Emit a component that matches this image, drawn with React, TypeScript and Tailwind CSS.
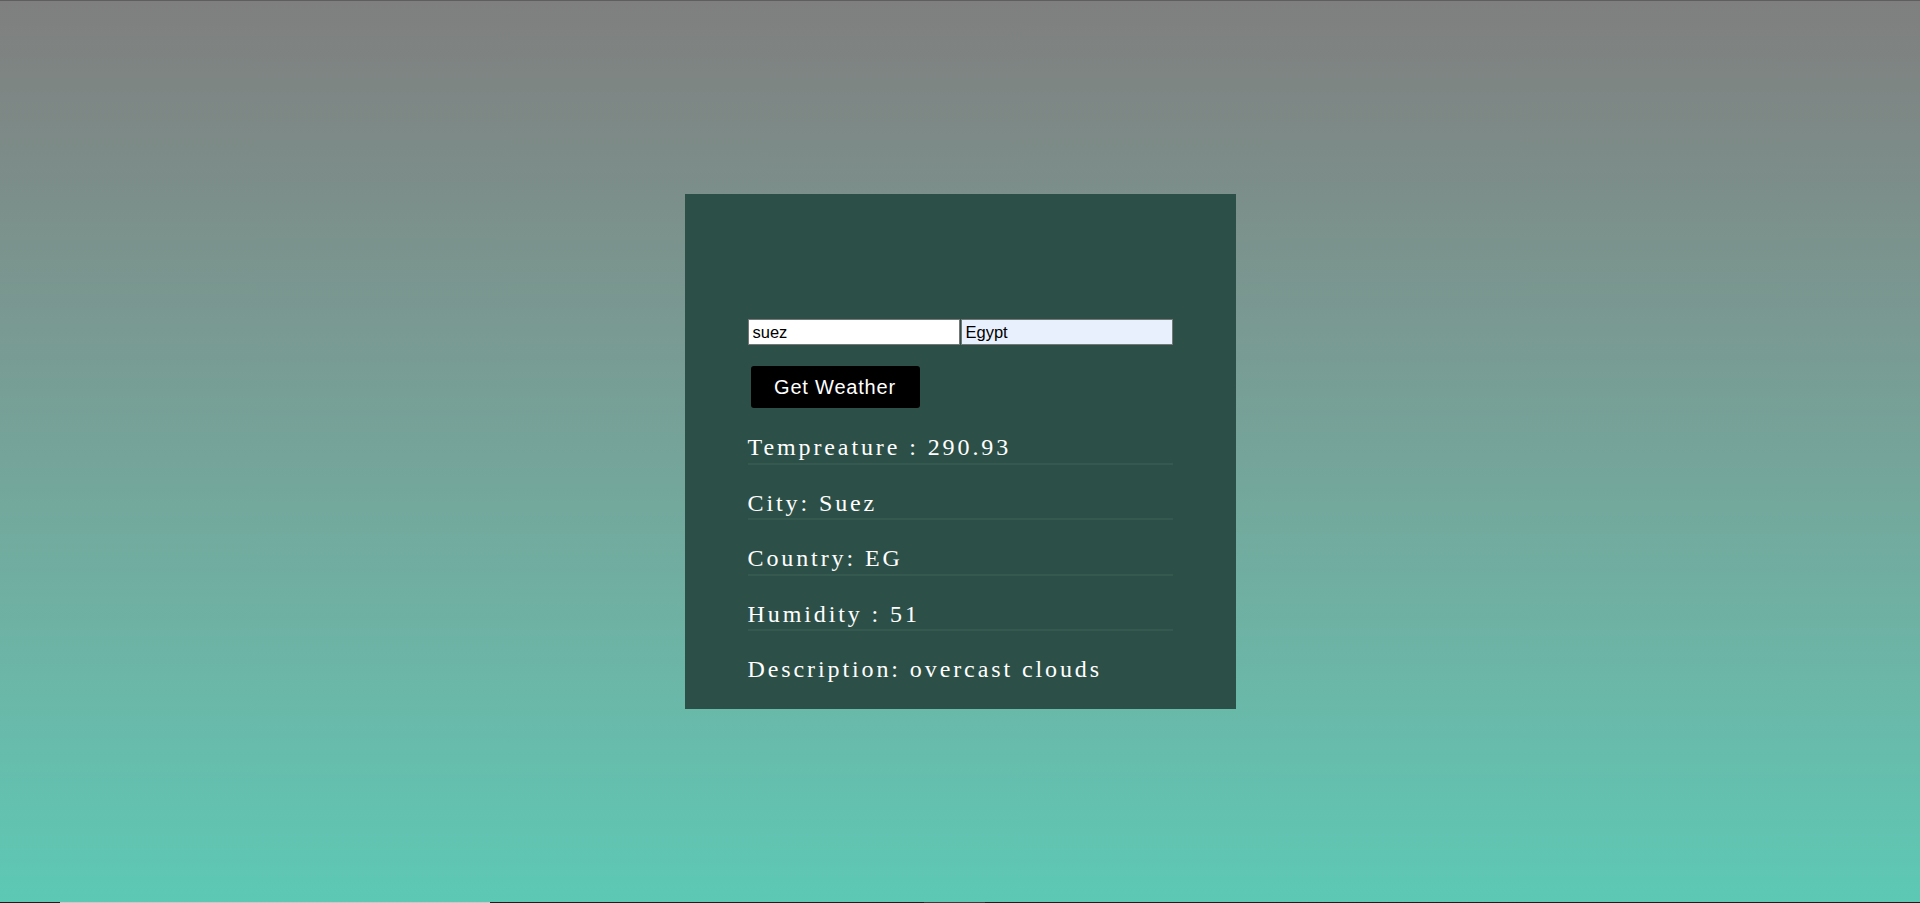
import React from "react";

const rows = [
  "Tempreature : 290.93",
  "City: Suez",
  "Country: EG",
  "Humidity : 51",
];

export default function App() {
  return (
    <div className="relative flex h-[903px] w-full flex-col overflow-hidden bg-gradient-to-b from-[#7f7f7f] to-[#5cc9b5]">
      <div className="h-px w-full bg-[#5e5e5e]" />
      <div className="flex flex-1 items-center justify-center">
        <div className="flex w-[551px] flex-col bg-[#2c5048] px-[63px] pt-[125px] pb-[25px]">
          <div className="flex gap-[1px]">
            <input
              defaultValue="suez"
              className="box-border h-[26px] w-[212px] border border-[#767676] bg-white pl-[4px] text-[16.5px] text-black outline-none"
              style={{ fontFamily: "Arial, 'Liberation Sans', sans-serif" }}
            />
            <input
              defaultValue="Egypt"
              className="box-border h-[26px] w-[212px] border border-[#767676] bg-[#e8f0fe] pl-[4px] text-[16.5px] text-black outline-none"
              style={{ fontFamily: "Arial, 'Liberation Sans', sans-serif" }}
            />
          </div>
          <button
            className="mt-[21px] ml-[3px] h-[42px] w-[169px] rounded-[3px] bg-black text-[20px] tracking-[0.8px] text-white"
            style={{ fontFamily: "Arial, 'Liberation Sans', sans-serif" }}
          >
            Get Weather
          </button>
          {rows.map((r, i) => (
            <p
              key={r}
              className={`${i === 0 ? "mt-[26px]" : "mt-[25px]"} border-b-2 border-[#35594f] pb-[1px] text-[24px] leading-[27.6px] tracking-[2.9px] text-white`}
              style={{ fontFamily: "'Times New Roman', 'Liberation Serif', serif" }}
            >
              {r}
            </p>
          ))}
          <p
            className="mt-[25px] text-[24px] leading-[27.6px] tracking-[2.9px] text-white"
            style={{ fontFamily: "'Times New Roman', 'Liberation Serif', serif" }}
          >
            Description: overcast clouds
          </p>
        </div>
      </div>
      <div className="flex h-px w-full bg-[#1c1c1c]">
        <div className="ml-[60px] w-[430px] bg-[#c8c8c8]" />
        <div className="ml-[434px] w-[61px] bg-[#3a3a3a]" />
      </div>
    </div>
  );
}
